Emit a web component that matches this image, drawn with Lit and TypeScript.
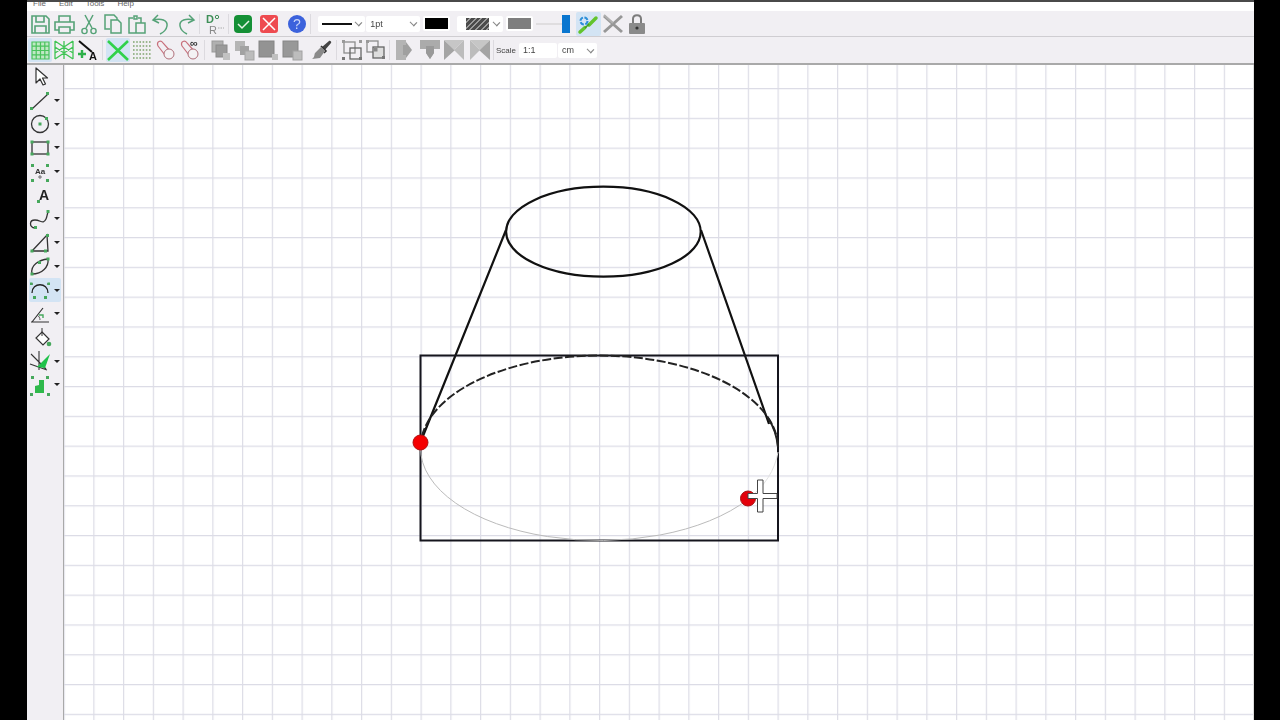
import { LitElement, css, html, svg } from 'lit';
import { customElement } from 'lit/decorators.js';

const G = '#55a277';
const H = '#46a85c';
const box = (x: number, y: number, s = 3, c = H) => svg`<rect x=${x} y=${y} width=${s} height=${s} fill=${c}></rect>`;

const icons: Record<string, unknown> = {
  save: svg`<path d="M4 4h14l3 3v14H4z M8 4v6h8V4 M7 21v-7h11v7" fill="none" stroke=${G} stroke-width="1.6"/>`,
  print: svg`<path d="M7 10V4h11v6 M7 18H3v-8h19v8h-4 M7 15h11v6H7z" fill="none" stroke=${G} stroke-width="1.6"/>`,
  cut: svg`<path d="M8 3l7 13 M16 3L9 16" fill="none" stroke=${G} stroke-width="1.5"/><circle cx="7.5" cy="19" r="2.6" fill="none" stroke=${G} stroke-width="1.4"/><circle cx="16.5" cy="19" r="2.6" fill="none" stroke=${G} stroke-width="1.4"/>`,
  copy: svg`<path d="M9 17H4V3h9l3 3v2 M10 8h7l3 3v10H10z" fill="none" stroke=${G} stroke-width="1.5"/>`,
  paste: svg`<path d="M8 6H4v15h16v-8 M16 11V6h-3 M9 4h3v3H9z M11 11h9v10h-9z" fill="none" stroke=${G} stroke-width="1.5"/>`,
  undo: svg`<path d="M9 3L4 8l6 3 M4 8c8-2 15 0 14 6-.5 3-3 6-7 8" fill="none" stroke=${G} stroke-width="1.5"/>`,
  redo: svg`<path d="M15 3l5 5-6 3 M20 8c-8-2-15 0-14 6 .5 3 3 6 7 8" fill="none" stroke=${G} stroke-width="1.5"/>`,
  dr: svg`<text x="3" y="11" font-family="Liberation Sans" font-size="11" font-weight="700" fill="#3f8f58">D</text><circle cx="14" cy="5" r="1.7" fill="none" stroke="#3f8f58"/><text x="6" y="22" font-family="Liberation Sans" font-size="11" fill="#888">R</text><path d="M15 16h6" stroke="#aaa" stroke-dasharray="1.5 1"/>`,
  ok: svg`<rect x="3" y="3" width="18" height="18" rx="4" fill="#159036"/><path d="M7 12l4 4 7-7" fill="none" stroke="#e8f5e8" stroke-width="1.5"/>`,
  no: svg`<rect x="3" y="3" width="18" height="18" rx="3" fill="#ee4a50"/><path d="M6 6l12 12 M18 6L6 18" stroke="#fff" stroke-width="1.5"/>`,
  help: svg`<circle cx="12" cy="12" r="9" fill="#3c62dc"/><text x="12" y="17" text-anchor="middle" font-family="Liberation Sans" font-size="14" fill="#c8d4f8">?</text>`,
  link: svg`<path d="M4 20l5-4.500" stroke="#62c42e" stroke-width="3.500" stroke-linecap="round"/><path d="M13 13l7-7" stroke="#62c42e" stroke-width="3.500" stroke-linecap="round"/><path d="M9 16l4-4" stroke="#3f9a24" stroke-width="1.600"/><circle cx="8" cy="9" r="3.500" fill="none" stroke="#2c8fd8" stroke-width="2" stroke-dasharray="4 1.500"/>`,
  scissors: svg`<path d="M3 4l18 16 M21 4L3 20" stroke="#979797" stroke-width="3"/><path d="M3 3l9 8" stroke="#b0b0b0" stroke-width="2"/>`,
  lock: svg`<path d="M8 11V7c0-5 8-5 8 0v4" fill="none" stroke="#7c7c7c" stroke-width="2"/><rect x="4" y="11" width="16" height="11" rx="1" fill="#8a8a8a"/><circle cx="12" cy="16" r="1.600" fill="#333"/>`,
  grid: svg`<path d="M4 4h17v17H4z M8.200 4v17 M12.500 4v17 M16.800 4v17 M4 8.200h17 M4 12.500h17 M4 16.800h17" fill="#bfe8c4" stroke="#49c25c" stroke-width="1.200"/>`,
  iso: svg`<path d="M3 3l9 6 9-6 M3 3v18 M21 3v18 M12 3v18 M3 3l18 12 M21 3L3 15 M3 9l18 12 M21 9L3 21" fill="none" stroke="#3fc454" stroke-width="1.300"/>`,
  snapText: svg`<path d="M3 3l13 11" stroke="#111" stroke-width="2"/><path d="M2 16h8 M6 12v8" stroke="#2fb04a" stroke-width="2.400"/><text x="13" y="22" font-family="Liberation Sans" font-size="11" font-weight="700" fill="#111">A</text>`,
  snapX: svg`<path d="M2 3l20 19 M22 3L2 22" stroke="#2fd14a" stroke-width="2.600"/>`,
  dots: svg`<path d="M3 4h18 M3 8h18 M3 12h18 M3 16h18 M3 20h18" stroke="#7fa56f" stroke-width="1.600" stroke-dasharray="1.600 1.600"/>`,
  hook: svg`<path d="M4 8c-2-5 3-6 5-3l8 9" fill="none" stroke="#c8707c" stroke-width="1.200"/><path d="M4 8l7 9" stroke="#c8707c" stroke-width="1.200"/><circle cx="15" cy="16" r="5" fill="#f4f2f4" stroke="#b0707a"/>`,
  hookInf: svg`<path d="M4 8c-2-5 3-6 5-3l8 9" fill="none" stroke="#c8707c" stroke-width="1.200"/><path d="M4 8l7 9" stroke="#c8707c" stroke-width="1.200"/><circle cx="15" cy="16" r="5" fill="#f4f2f4" stroke="#b0707a"/><text x="12" y="9" font-family="Liberation Sans" font-size="11" font-weight="700" fill="#333">∞</text>`,
  front: svg`<rect x="4" y="3" width="11" height="11" fill="#b0b0b0" stroke="#999"/><rect x="8" y="7" width="11" height="12" fill="#9a9a9a" stroke="#8a8a8a"/><rect x="15" y="15" width="7" height="7" fill="#c2c2c2"/>`,
  back: svg`<rect x="3" y="3" width="10" height="10" fill="#b5b5b5"/><rect x="8" y="8" width="9" height="9" fill="#a2a2a2"/><rect x="13" y="13" width="9" height="9" fill="#bcbcbc" stroke="#a5a5a5"/>`,
  top: svg`<rect x="3" y="3" width="15" height="16" fill="#939393" stroke="#848484"/><rect x="16" y="16" width="6" height="6" fill="#c0c0c0"/>`,
  bottom: svg`<rect x="3" y="3" width="15" height="16" fill="#989898" stroke="#858585"/><rect x="13" y="13" width="9" height="9" fill="#bdbdbd" stroke="#a2a2a2"/>`,
  brush: svg`<path d="M12 9l7-6c1-1 3 1 2 2l-6 7z" fill="#444"/><path d="M11 8l5 5-2 2" stroke="#333" stroke-width="1.600" fill="none"/><path d="M11 9l4 4-5 7-8 1c3-2 2-4 3-6z" fill="#8a8a8a"/>`,
  group: svg`<rect x="4" y="4" width="11" height="11" fill="none" stroke="#8c8c8c" stroke-width="1.300"/><rect x="10" y="10" width="11" height="11" fill="none" stroke="#666" stroke-width="1.300"/>${box(2, 2, 3, '#999')}${box(19, 2, 3, '#999')}${box(2, 19, 3, '#777')}${box(19, 19, 3, '#777')}`,
  ungroup: svg`<rect x="3" y="3" width="11" height="11" fill="none" stroke="#8c8c8c" stroke-width="1.300"/><rect x="9" y="9" width="11" height="11" fill="#ddd" stroke="#666" stroke-width="1.300"/><rect x="10" y="10" width="3.500" height="3.500" fill="#888"/>${box(2, 2, 3, '#999')}${box(18, 18, 3, '#777')}`,
  arrowR: svg`<rect x="4" y="2" width="10" height="20" fill="#b4b4b4"/><path d="M11 7h3V4l6 8-6 8v-3h-3z" fill="#a0a0a0"/>`,
  arrowD: svg`<path d="M2 2h20v9h-6v4l-4 6-4-6v-4H2z" fill="#ababab"/><path d="M8 8h8v7l-4 6-4-6z" fill="#999"/>`,
  flipA: svg`<path d="M2 2l11 10L2 22z" fill="#a4a4a4"/><path d="M22 2L12 12l10 10z" fill="#bcbcbc"/><path d="M2 2h20L12 12z" fill="#c6c6c6"/>`,
  flipB: svg`<path d="M22 2L11 12l11 10z" fill="#a4a4a4"/><path d="M2 2l10 10L2 22z" fill="#bcbcbc"/><path d="M2 2h20L12 12z" fill="#c6c6c6"/>`,
  pointer: svg`<path d="M8 3v15l4-4 3 6 2.500-1-3-6h5z" fill="#fff" stroke="#333" stroke-width="1.200" stroke-linejoin="round"/>`,
  line: svg`<path d="M4 20L20 5" stroke="#333" stroke-width="1.200"/>${box(2, 18)}${box(18, 3)}`,
  circle: svg`<circle cx="12" cy="12" r="8.500" fill="none" stroke="#333" stroke-width="1.300"/>${box(10.500, 10.500)}${box(17, 5)}`,
  rect: svg`<rect x="4" y="6" width="16" height="12" fill="none" stroke="#333" stroke-width="1.300"/>${box(2.500, 4.500)}${box(18.500, 4.500)}${box(2.500, 16.500)}${box(18.500, 16.500)}`,
  textBox: svg`${box(3, 4)}${box(18, 4)}${box(3, 19)}${box(18, 19)}<text x="12" y="14" text-anchor="middle" font-family="Liberation Sans" font-size="8" font-weight="700" fill="#333">Aa</text><path d="M10 17h4 M12 15v4" stroke="#555" stroke-width=".8"/>`,
  text: svg`${box(9, 17)}<text x="16" y="17" text-anchor="middle" font-family="Liberation Sans" font-size="14" font-weight="700" fill="#222">A</text>`,
  curve: svg`<path d="M7 21C1 20 1 13 7 13s8 5 11-1c1-2 1-4 2-7" fill="none" stroke="#333" stroke-width="1.300"/>${box(6, 19)}${box(18.500, 3)}`,
  tri: svg`<path d="M4 20L19 4l1 16z" fill="none" stroke="#333" stroke-width="1.300"/>${box(2.500, 18.500)}${box(16, 18.500)}${box(18, 3)}`,
  lens: svg`<path d="M4 20C2 11 11 6 20 5c1 8-6 15-16 15z" fill="none" stroke="#333" stroke-width="1.300"/>${box(2.500, 18.500)}${box(18.500, 3.500)}${box(10, 7)}`,
  arc: svg`<path d="M4 15C4 4 20 4 20 15" fill="none" stroke="#222" stroke-width="1.300"/><path d="M2 6h3" stroke="#333"/><path d="M19 6h3" stroke="#333"/>${box(5, 18)}${box(16, 18)}${box(2, 4.500, 2.500)}${box(19.500, 4.500, 2.500)}`,
  angle: svg`<path d="M3 20h18 M4 20L15 6" fill="none" stroke="#333" stroke-width="1.200"/><path d="M9 13c2 1 3 3 3 5" fill="none" stroke="#555"/><path d="M11 13h4v3" fill="none" stroke=${H} stroke-width="1.400"/>`,
  fill: svg`<path d="M14 7l7 7-6 6-7-7z" fill="#fff" stroke="#333" stroke-width="1.200"/><path d="M14 3v8" stroke="#333"/><circle cx="21" cy="19" r="2.300" fill=${H}/>`,
  shade: svg`<path d="M2 15l17 6 M11 2v19 M3 5l15 15" stroke="#333" stroke-width="1.100"/><path d="M9 18l13-13-5 14z" fill="#1fc24a"/>`,
  area: svg`<path d="M7 20v-7l4-1v-5h5v13z" fill="#2fb94b"/>${box(3, 3)}${box(18, 3)}${box(2, 20)}${box(19, 20)}`,
};

@customElement('app-root')
export class AppRoot extends LitElement {
  static styles = css`
    :host {
      display: flex;
      width: 1280px;
      height: 720px;
      background: #000;
      overflow: hidden;
      font-family: 'Liberation Sans', Arial, sans-serif;
    }

    .app {
      margin-left: 27px;
      width: 1227px;
      height: 720px;
      display: flex;
      flex-direction: column;
      background: #fff;
    }

    .menu {
      height: 9px;
      border-top: 2px solid #4a4a4a;
      background: #fff;
      display: flex;
      gap: 13px;
      padding-left: 6px;
      overflow: hidden;
      font-size: 8px;
      line-height: 3px;
      color: #666;
      flex: none;
    }

    .bar {
      flex: none;
      display: flex;
      align-items: center;
      padding-left: 1px;
      background: #f1eff3;
      filter: blur(0.35px);
    }

    .bar1 {
      height: 25px;
      border-bottom: 1px solid #cfcdd1;
    }

    .bar1 .btn {
      width: 24.300px;
    }

    .bar2 {
      height: 26px;
      border-bottom: 2px solid #a9a9a9;
    }

    .btn {
      flex: none;
      width: 24px;
      height: 24px;
      display: block;
    }

    .btn svg {
      display: block;
      width: 24px;
      height: 24px;
    }

    .on {
      background: #d3e4f4;
      border-radius: 2px;
    }

    .sep {
      flex: none;
      width: 1px;
      height: 20px;
      background: #dcdadf;
      margin: 0 3px 0 2px;
    }

    .sep.thin {
      margin: 0 2px 0 1px;
    }

    .sp1 { flex: none; width: 1px; }
    .sp2 { flex: none; width: 2px; }
    .sp4 { flex: none; width: 4px; }
    .sp6 { flex: none; width: 6px; }

    .sel {
      flex: none;
      height: 16px;
      box-sizing: border-box;
      background: #fff;
      border-radius: 2px;
      display: flex;
      align-items: center;
      font-size: 9px;
      color: #444;
      padding: 0 4px;
    }

    .chev {
      margin-left: auto;
      width: 4px;
      height: 4px;
      border-right: 1px solid #888;
      border-bottom: 1px solid #888;
      transform: translateY(-1px) rotate(45deg) scaleX(1.200);
    }

    .sel-line { width: 47px; margin-left: 5px; }
    .sel-line i { width: 30px; height: 2px; background: #111; }
    .sel-pt { width: 54px; margin-left: 1px; }
    .swatch { flex: none; width: 27px; height: 15px; margin-left: 3px; background: #fff; padding: 2px; box-sizing: border-box; border-radius: 2px; }
    .swatch i { display: block; height: 100%; background: #000; }
    .sel-hatch { width: 46px; margin-left: 7px; padding-left: 9px; }
    .sel-hatch i {
      width: 23px;
      height: 12px;
      background: repeating-linear-gradient(135deg, #4a4a4a 0 2.500px, #9b9b9b 2.500px 4px);
    }
    .swatch-gray i { background: #7e7e7e; }

    .slider {
      flex: none;
      width: 34px;
      height: 18px;
      margin: 0 6px 0 3px;
      display: flex;
      align-items: center;
      justify-content: flex-end;
      background: linear-gradient(#dfdddf, #dfdddf) left center / 28px 2px no-repeat;
    }

    .slider i {
      display: block;
      width: 8px;
      height: 18px;
      background: #0a76cf;
    }

    .scale {
      flex: none;
      font-size: 8px;
      color: #444;
      margin-right: 3px;
    }

    .input { width: 38px; height: 15px; }
    .sel-unit { width: 39px; margin-left: 1px; height: 15px; }

    .main {
      flex: 1;
      display: flex;
      min-height: 0;
    }

    .side {
      flex: none;
      width: 37px;
      box-sizing: border-box;
      padding: 0 0 0 2px;
      background: #f1eff3;
      border-right: 1px solid #a9a9a9;
      filter: blur(0.3px);
    }

    .tool {
      height: 23.700px;
      width: 32px;
      display: flex;
      align-items: center;
      border-radius: 2px;
    }

    .tool svg {
      display: block;
      flex: none;
      width: 24px;
      height: 24px;
      margin-left: -1px;
    }

    .drop {
      width: 0;
      height: 0;
      margin-left: 2px;
      border: 3px solid transparent;
      border-top: 3px solid #222;
      border-bottom: 0;
    }

    .canvas {
      flex: none;
      display: block;
      width: 1190px;
      height: 655px;
    }
  `;

  icon(name: string, on = false) {
    return html`<span class="btn ${on ? 'on' : ''}"><svg viewBox="0 0 24 24">${icons[name]}</svg></span>`;
  }

  tool(name: string, drop = true, on = false) {
    return html`<div class="tool ${on ? 'on' : ''}">
      <svg viewBox="0 0 24 24">${icons[name]}</svg>
      ${drop ? html`<span class="drop"></span>` : ''}
    </div>`;
  }

  render() {
    return html`
      <div class="app">
        <div class="menu"><span>File</span><span>Edit</span><span>Tools</span><span>Help</span></div>
        <div class="bar bar1">
          ${['save', 'print', 'cut', 'copy', 'paste', 'undo', 'redo'].map((n) => this.icon(n))}
          <span class="sep thin"></span><span class="sp1"></span>
          ${this.icon('dr')}
          <span class="sep thin"></span>
          ${this.icon('ok')}<span class="sp1"></span>${this.icon('no')}
          <span class="sp4"></span>
          ${this.icon('help')}
          <span class="sep thin"></span>
          <div class="sel sel-line"><i></i><span class="chev"></span></div>
          <div class="sel sel-pt">1pt<span class="chev"></span></div>
          <div class="swatch"><i></i></div>
          <div class="sel sel-hatch"><i></i><span class="chev"></span></div>
          <div class="swatch swatch-gray"><i></i></div>
          <div class="slider"><i></i></div>
          ${this.icon('link', true)}${this.icon('scissors')}${this.icon('lock')}
        </div>
        <div class="bar bar2">
          ${this.icon('grid', true)}${this.icon('iso')}${this.icon('snapText')}
          <span class="sep"></span>
          ${this.icon('snapX', true)}${this.icon('dots')}${this.icon('hook')}${this.icon('hookInf')}
          <span class="sep"></span>
          ${this.icon('front')}${this.icon('back')}${this.icon('top')}${this.icon('bottom')}
          <span class="sp6"></span>
          ${this.icon('brush')}
          <span class="sep"></span>
          ${this.icon('group')}${this.icon('ungroup')}
          <span class="sep thin"></span>
          ${this.icon('arrowR')}<span class="sp2"></span>${this.icon('arrowD')}${this.icon('flipA')}<span class="sp2"></span>${this.icon('flipB')}
          <span class="sep thin"></span>
          <span class="scale">Scale</span>
          <div class="sel input">1:1</div>
          <div class="sel sel-unit">cm<span class="chev"></span></div>
        </div>
        <div class="main">
          <div class="side">
            ${this.tool('pointer', false)}
            ${this.tool('line')}
            ${this.tool('circle')}
            ${this.tool('rect')}
            ${this.tool('textBox')}
            ${this.tool('text', false)}
            ${this.tool('curve')}
            ${this.tool('tri')}
            ${this.tool('lens')}
            ${this.tool('arc', true, true)}
            ${this.tool('angle')}
            ${this.tool('fill', false)}
            ${this.tool('shade')}
            ${this.tool('area')}
          </div>
          <svg class="canvas" viewBox="64 65 1190 655">
            <defs>
              <pattern id="grid" patternUnits="userSpaceOnUse" x="93.300" y="88" width="29.750" height="29.800">
                <path d="M0.600 0v29.800 M0 0.600h29.750" stroke="#dcdce6" stroke-width="1.200" fill="none"></path>
              </pattern>
            </defs>
            <rect x="64" y="65" width="1190" height="655" fill="url(#grid)"></rect>
            <rect x="1253" y="65" width="1" height="655" fill="#ddd"></rect>

            <ellipse cx="603.400" cy="231.700" rx="97.300" ry="45" fill="none" stroke="#111" stroke-width="2.200"></ellipse>
            <path d="M506 230L423 436 M701 230L769 424" fill="none" stroke="#111" stroke-width="2.200"></path>
            <rect x="420.500" y="355.500" width="357.500" height="185" fill="none" stroke="#15151d" stroke-width="2"></rect>

            <path d="M420.500 448A178.750 92.500 0 0 1 778 448" fill="none" stroke="#222" stroke-width="2" stroke-dasharray="9 2.500"></path>
            <path d="M768 418c6 9 9 19 10 29" fill="none" stroke="#222" stroke-width="2"></path>
            <path d="M420.500 448A178.750 92.500 0 0 0 748 499.300" fill="none" stroke="#bbb" stroke-width="1"></path>
            <path d="M778 452C775 470 765 486 748 499" fill="none" stroke="#e2e2e2" stroke-width="1"></path>

            <circle cx="420.500" cy="442.500" r="7.500" fill="#f50000" stroke="#b01010" stroke-width="1"></circle>
            <circle cx="748" cy="498.500" r="7.500" fill="#e4000a" stroke="#a81010" stroke-width="1"></circle>
            <path d="M757.500 480h5.500v13.500h14v5h-14V512h-5.500v-13.500H748v-5h9.500z" fill="#fff" stroke="#444" stroke-width="1"></path>
          </svg>
        </div>
      </div>
    `;
  }
}
